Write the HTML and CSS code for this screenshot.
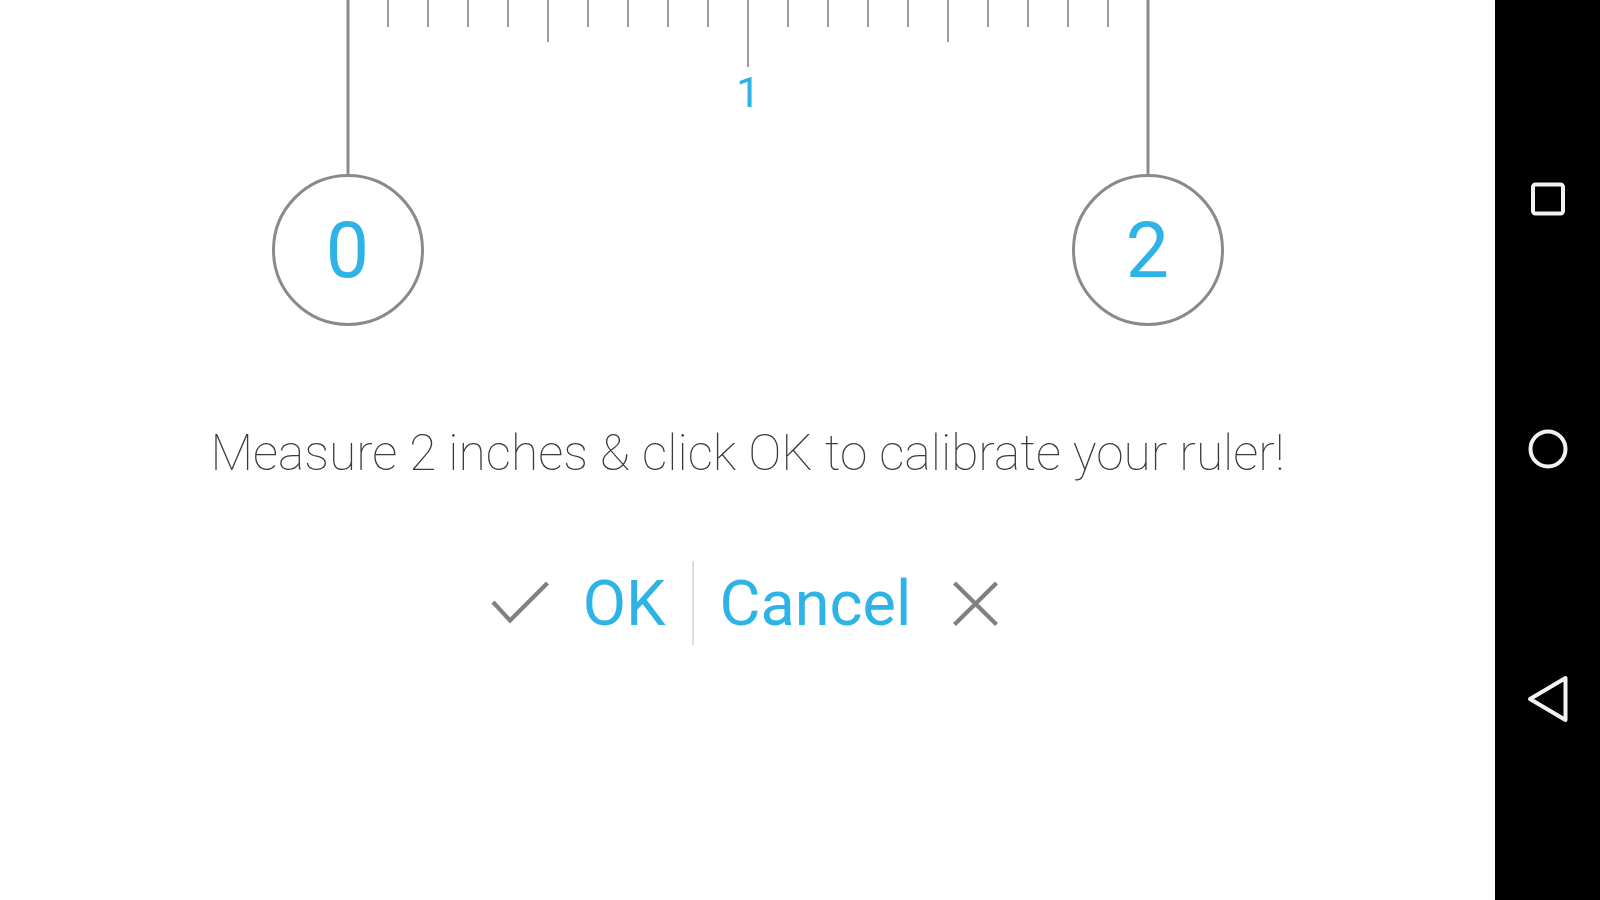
FILE: index.html
```html
<!DOCTYPE html>
<html lang="en">
<head>
<meta charset="utf-8">
<title>Calibrate ruler</title>
<link rel="stylesheet" href="styles.css">
</head>
<body>
<div class="screen">
  <main class="main">
    <div class="ruler">
      <svg class="ruler-ticks" width="952" height="174" viewBox="0 0 952 174">
        <g stroke="#9e9e9e" stroke-width="2">
          <line x1="116" y1="0" x2="116" y2="27"/>
          <line x1="156" y1="0" x2="156" y2="27"/>
          <line x1="196" y1="0" x2="196" y2="27"/>
          <line x1="236" y1="0" x2="236" y2="27"/>
          <line x1="276" y1="0" x2="276" y2="42"/>
          <line x1="316" y1="0" x2="316" y2="27"/>
          <line x1="356" y1="0" x2="356" y2="27"/>
          <line x1="396" y1="0" x2="396" y2="27"/>
          <line x1="436" y1="0" x2="436" y2="27"/>
          <line x1="476" y1="0" x2="476" y2="67"/>
          <line x1="516" y1="0" x2="516" y2="27"/>
          <line x1="556" y1="0" x2="556" y2="27"/>
          <line x1="596" y1="0" x2="596" y2="27"/>
          <line x1="636" y1="0" x2="636" y2="27"/>
          <line x1="676" y1="0" x2="676" y2="42"/>
          <line x1="716" y1="0" x2="716" y2="27"/>
          <line x1="756" y1="0" x2="756" y2="27"/>
          <line x1="796" y1="0" x2="796" y2="27"/>
          <line x1="836" y1="0" x2="836" y2="27"/>
        </g>
        <g stroke="#8a8a8a" stroke-width="3">
          <line x1="76" y1="0" x2="76" y2="174"/>
          <line x1="876" y1="0" x2="876" y2="174"/>
        </g>
        <text class="inch-label" x="476" y="107" text-anchor="middle">1</text>
      </svg>
      <div class="handles">
        <div class="handle">0</div>
        <div class="handle">2</div>
      </div>
    </div>

    <p class="instructions">Measure 2 inches &amp; click OK to calibrate your ruler!</p>

    <div class="actions">
      <button class="action action-ok" type="button">
        <svg class="icon-check" width="61" height="46" viewBox="0 0 61 46">
          <path d="M4 22 L21 40.5 L58.5 3" fill="none" stroke="#808080" stroke-width="4.2"/>
        </svg>
        <span class="action-label">OK</span>
      </button>
      <span class="divider"></span>
      <button class="action action-cancel" type="button">
        <span class="action-label">Cancel</span>
        <svg class="icon-close" width="49" height="49" viewBox="0 0 49 49">
          <path d="M3.5 4 L45.5 45.5 M45.5 4 L3.5 45.5" fill="none" stroke="#808080" stroke-width="4.2"/>
        </svg>
      </button>
    </div>
  </main>

  <nav class="navbar">
    <svg class="nav-icon" width="48" height="48" viewBox="0 0 48 48">
      <rect x="9" y="9.5" width="30" height="29" rx="2.5" fill="none" stroke="#f2f2f2" stroke-width="4"/>
    </svg>
    <svg class="nav-icon" width="48" height="48" viewBox="0 0 48 48">
      <circle cx="24" cy="24" r="17.5" fill="none" stroke="#f2f2f2" stroke-width="4"/>
    </svg>
    <svg class="nav-icon" width="48" height="48" viewBox="0 0 48 48">
      <polygon points="6,24 41.5,3 41.5,45" fill="none" stroke="#f2f2f2" stroke-width="4" stroke-linejoin="round"/>
    </svg>
  </nav>
</div>
</body>
</html>
```

FILE: styles.css
```css
* {
  box-sizing: border-box;
}

html, body {
  margin: 0;
  padding: 0;
  width: 1600px;
  height: 900px;
  overflow: hidden;
  background: #ffffff;
  font-family: Roboto, "Liberation Sans", sans-serif;
}

.screen {
  display: flex;
  width: 1600px;
  height: 900px;
}

.main {
  flex: 1;
  display: flex;
  flex-direction: column;
  align-items: center;
  background: #ffffff;
}

.ruler {
  width: 952px;
  display: flex;
  flex-direction: column;
}

.ruler-ticks {
  display: block;
}

.inch-label {
  font-family: Roboto, "Liberation Sans", sans-serif;
  font-size: 43px;
  fill: #2db3e6;
}

.handles {
  display: flex;
  justify-content: space-between;
}

.handle {
  width: 152px;
  height: 152px;
  border: 3px solid #8a8a8a;
  border-radius: 50%;
  display: flex;
  align-items: center;
  justify-content: center;
  padding-top: 2px;
  font-size: 77px;
  color: #2db3e6;
}

.instructions {
  margin: 98px 0 0;
  font-size: 49.7px;
  font-weight: 100;
  color: #3a3a3a;
  white-space: nowrap;
}

.actions {
  margin-top: 79px;
  height: 84px;
  display: flex;
  align-items: center;
  margin-right: 6px;
}

.action {
  display: flex;
  align-items: center;
  background: none;
  border: 0;
  padding: 0;
  font-family: Roboto, "Liberation Sans", sans-serif;
  font-size: 63px;
  color: #2db3e6;
  cursor: pointer;
}

.action-ok {
  gap: 33px;
}

.action-cancel {
  gap: 40px;
}

.divider {
  width: 2px;
  height: 84px;
  background: #dddddd;
  margin: 0 26px;
}

.navbar {
  width: 105px;
  background: #000000;
  display: flex;
  flex-direction: column;
  align-items: center;
  justify-content: center;
  gap: 202px;
}

.nav-icon {
  display: block;
}

.nav-icon:first-child {
  margin-top: -2px;
}
```
